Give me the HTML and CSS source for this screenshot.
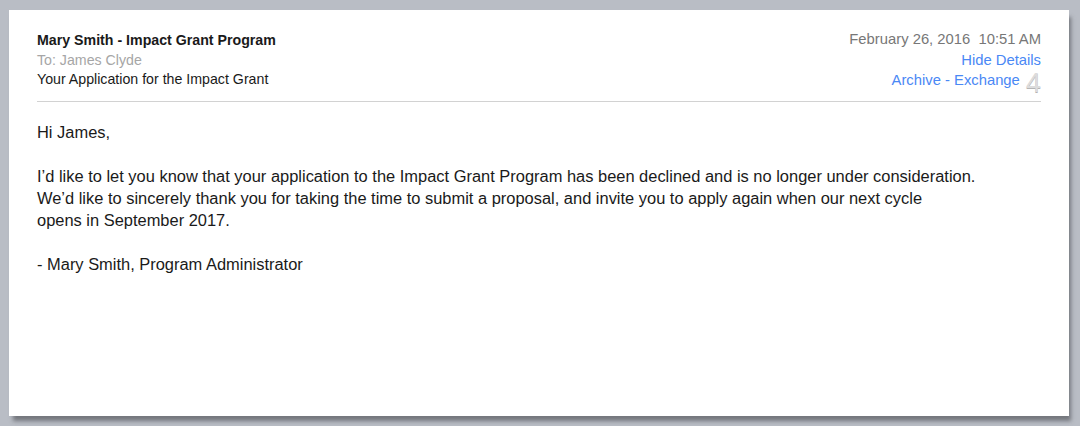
FILE: index.html
```html
<!DOCTYPE html>
<html lang="en">
<head>
  <meta charset="UTF-8" />
  <title>Your Application for the Impact Grant</title>
  <link rel="stylesheet" href="styles.css">
</head>
<body>
  <div class="message">
    <div class="header">
      <div class="meta">
        <div class="from">Mary Smith - Impact Grant Program</div>
        <div class="to">To: James Clyde</div>
        <div class="subject">Your Application for the Impact Grant</div>
      </div>
      <div class="info">
        <div class="date">February 26, 2016&nbsp; 10:51 AM</div>
        <a class="link" href="#">Hide Details</a>
        <div class="folder"><a class="link" href="#">Archive - Exchange</a> <span class="count">4</span></div>
      </div>
    </div>

    <div class="content">
      <p>Hi James,</p>
      <p>I’d like to let you know that your application to the Impact Grant Program has been declined and is no longer under consideration.<br>
      We’d like to sincerely thank you for taking the time to submit a proposal, and invite you to apply again when our next cycle<br>
      opens in September 2017.</p>
      <p>- Mary Smith, Program Administrator</p>
    </div>
  </div>
</body>
</html>
```

FILE: styles.css
```css
* {
  box-sizing: border-box;
  margin: 0;
  padding: 0;
}

body {
  background-color: #b9bdc5;
  font-family: 'Liberation Sans', Arial, sans-serif;
  padding: 10px 11px 10px 9px;
  height: 426px;
  overflow: hidden;
}

.message {
  background: #fff;
  height: 406px;
  padding: 21px 28px 0 28px;
  box-shadow: 3px 6px 4px -1px rgba(60, 62, 68, 0.55);
}

.header {
  display: flex;
  justify-content: space-between;
  padding-bottom: 10px;
  border-bottom: 1px solid #d2d2d2;
  font-size: 14.2px;
  line-height: 19.5px;
}

.from {
  font-weight: bold;
  color: #1a1a1a;
}

.to {
  color: #a6a6a6;
}

.subject {
  color: #1a1a1a;
}

.info {
  display: flex;
  flex-direction: column;
  align-items: flex-end;
  margin-top: -1px;
  font-size: 14.8px;
}

.date {
  color: #777;
  margin-bottom: 1px;
}

.link {
  color: #4a88f5;
  text-decoration: none;
}

.folder {
  margin-top: 1px;
}

.count {
  font-size: 27px;
  line-height: 14px;
  vertical-align: -7px;
  color: #dcdcdc;
  text-shadow: 0 1px 0 #b5b5b5;
  margin-left: 2px;
}

.content {
  padding-top: 19px;
  font-size: 16.45px;
  line-height: 22px;
  color: #1a1a1a;
}

.content p {
  margin-bottom: 22px;
}
```
